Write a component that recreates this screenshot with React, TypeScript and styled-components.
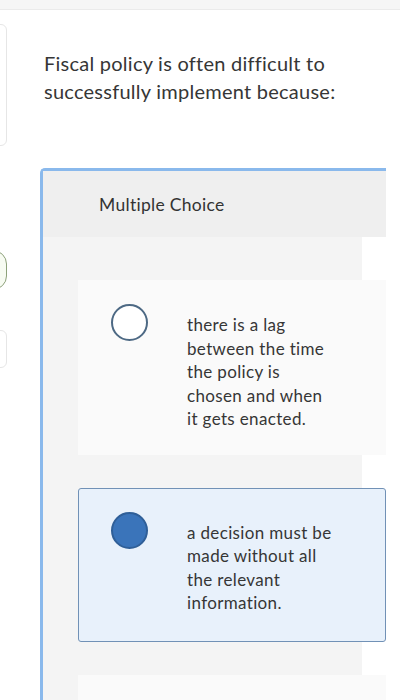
import React from "react";
import styled, { createGlobalStyle } from "styled-components";

const Global = createGlobalStyle`
  html, body { margin: 0; padding: 0; background: #ffffff; }
  body { width: 400px; height: 700px; overflow: hidden; font-family: Lato, "Open Sans", sans-serif; color: #333; }
`;

const TopBar = styled.div`
  height: 9px;
  background: #f6f6f6;
  border-bottom: 1px solid #ebebeb;
`;

const Page = styled.div`
  display: grid;
  grid-template-columns: 7px 1fr;
`;

const Rail = styled.div`
  display: flex;
  flex-direction: column;
  padding-top: 14px;
`;

const RailCard = styled.div<{ $h: number; $gap: number; $tone?: "green" }>`
  width: 40px;
  height: ${(p) => p.$h}px;
  margin-left: -33px;
  margin-bottom: ${(p) => p.$gap}px;
  box-sizing: border-box;
  border: ${(p) => (p.$tone === "green" ? "1.5px solid #8da17a" : "1px solid #e6e6e6")};
  background: ${(p) => (p.$tone === "green" ? "#f7fbf2" : "#ffffff")};
  border-radius: ${(p) => (p.$tone === "green" ? "14px" : "6px")};
`;

const Main = styled.div`
  display: flex;
  flex-direction: column;
`;

const Question = styled.p`
  margin: 39px 0 0 37px;
  font-size: 20px;
  letter-spacing: 0.25px;
  line-height: 28px;
  color: #363636;
  width: 310px;
`;

const Card = styled.section`
  margin: 63px 0 0 33px;
  width: 346px;
  box-sizing: border-box;
  border-left: 3px solid #8ab9ec;
  border-top: 3px solid #8ab9ec;
  border-top-left-radius: 5px;
`;

const CardHeader = styled.div`
  height: 66px;
  display: flex;
  align-items: center;
  padding-left: 56px;
  background: #efefef;
  font-size: 17.5px;
  letter-spacing: 0.3px;
  color: #333;
`;

const CardBody = styled.div`
  width: 319px;
  background: #f4f4f4;
  padding-top: 43px;
  display: flex;
  flex-direction: column;
  gap: 33px;
`;

const Option = styled.div<{ $selected?: boolean; $h?: number }>`
  margin-left: 35px;
  width: 308px;
  box-sizing: border-box;
  display: flex;
  align-items: flex-start;
  padding: ${(p) => (p.$selected ? "23px 0 26px 32px" : "24px 0 24px 33px")};
  background: ${(p) => (p.$selected ? "#e8f1fb" : "#fafafa")};
  border: ${(p) => (p.$selected ? "1px solid #7191b6" : "none")};
  border-radius: ${(p) => (p.$selected ? "3px" : "0")};
  min-height: ${(p) => p.$h ?? 60}px;
`;

const Radio = styled.span<{ $checked?: boolean }>`
  flex: none;
  width: 37px;
  height: 37px;
  box-sizing: border-box;
  border-radius: 50%;
  border: 2px solid ${(p) => (p.$checked ? "#2f5f98" : "#4d6984")};
  background: ${(p) => (p.$checked ? "#3a74ba" : "#ffffff")};
`;

const OptionText = styled.span`
  margin: 9px 0 0 39px;
  width: 180px;
  font-size: 17px;
  letter-spacing: 0.35px;
  line-height: 23.5px;
  color: #363636;
`;

const Line = styled.span`
  display: block;
  white-space: nowrap;
`;

const options = [
  {
    lines: ["there is a lag", "between the time", "the policy is", "chosen and when", "it gets enacted."],
    selected: false,
  },
  {
    lines: ["a decision must be", "made without all", "the relevant", "information."],
    selected: true,
  },
];

export default function App() {
  return (
    <>
      <Global />
      <TopBar />
      <Page>
        <Rail>
          <RailCard $h={122} $gap={104} />
          <RailCard $h={40} $gap={40} $tone="green" />
          <RailCard $h={38} $gap={0} />
        </Rail>
        <Main>
          <Question>Fiscal policy is often difficult to successfully implement because:</Question>
          <Card>
            <CardHeader>Multiple Choice</CardHeader>
            <CardBody>
              {options.map((o, i) => (
                <Option key={i} $selected={o.selected}>
                  <Radio $checked={o.selected} />
                  <OptionText>
                    {o.lines.map((l) => (
                      <Line key={l}>{l}</Line>
                    ))}
                  </OptionText>
                </Option>
              ))}
              <Option $h={120} />
            </CardBody>
          </Card>
        </Main>
      </Page>
    </>
  );
}
